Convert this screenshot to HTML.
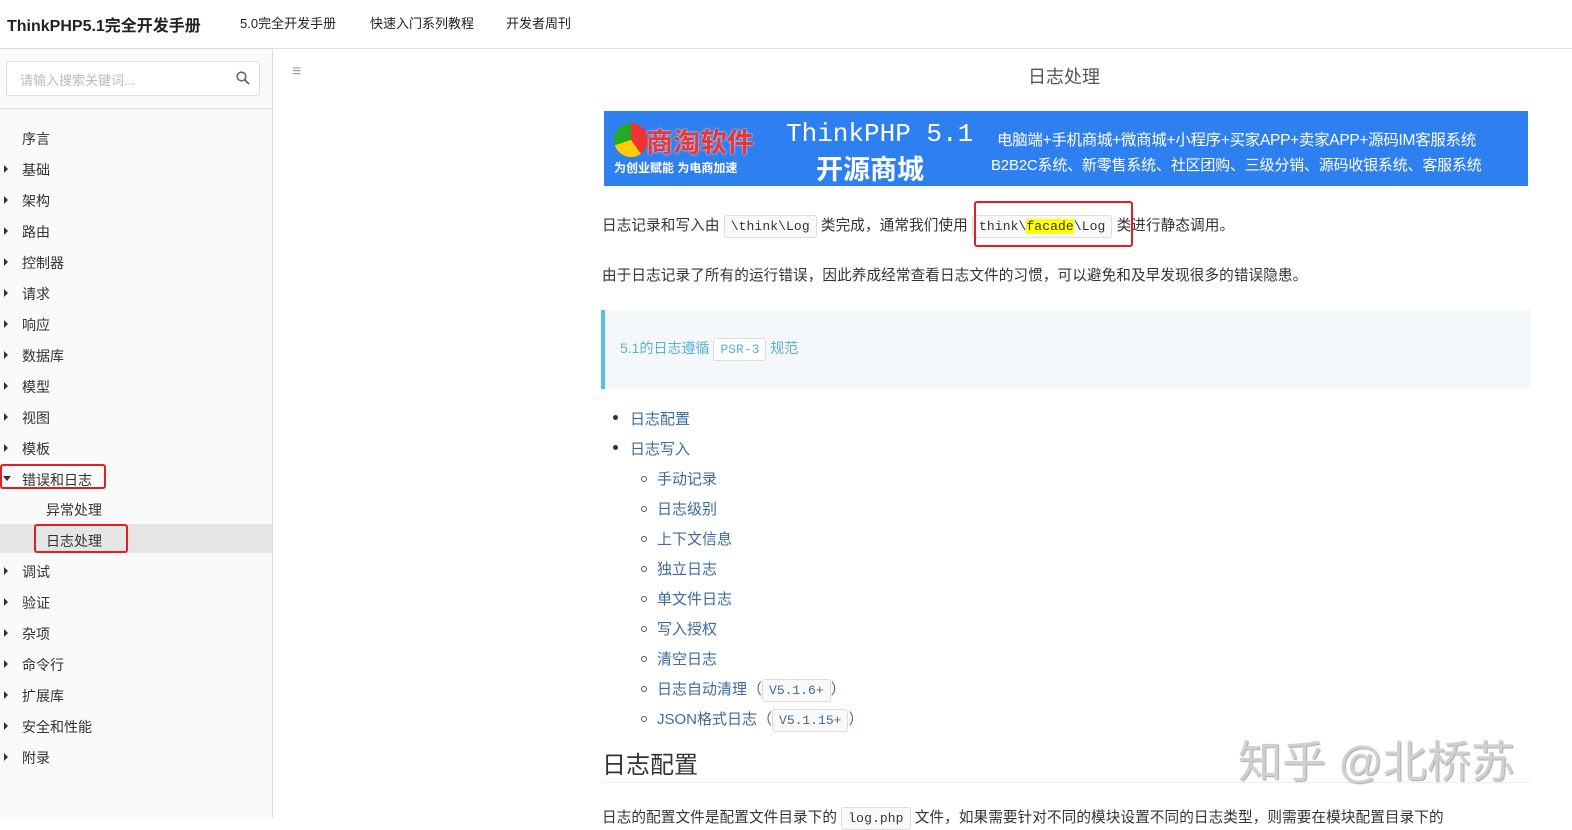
<!DOCTYPE html>
<html><head><meta charset="utf-8"><style>
*{margin:0;padding:0;box-sizing:border-box}
body{width:1572px;height:818px;overflow:hidden;background:#fff;font-family:"Liberation Sans","Noto Sans CJK SC",sans-serif;color:#333;position:relative;font-size:14px}
.a{position:absolute;white-space:nowrap}
#hdr{position:absolute;left:0;top:0;width:1572px;height:49px;border-bottom:1px solid #ddd;background:#fff}
#side{position:absolute;left:0;top:49px;width:273px;height:769px;background:#fafafa;border-right:1px solid #ddd}
.it{position:absolute;left:22px;font-size:14px;color:#333}
.tri{position:absolute;left:4px;width:0;height:0;border-top:4px solid transparent;border-bottom:4px solid transparent;border-left:4px solid #333}
code{font-family:"Liberation Mono",monospace;font-size:13px;border:1px solid #ddd;border-radius:3px;background:#f9f9f9;padding:3px 6px;color:#333}
.lk{color:#3d6b9e;font-size:15px}
.bul{position:absolute;width:5px;height:5px;border-radius:50%;background:#333}
.cir{position:absolute;width:6px;height:6px;border-radius:50%;border:1px solid #555}
.red{position:absolute;border:2px solid #e02020;border-radius:3px}
.p{font-size:14.6px;letter-spacing:0.1px}
</style></head><body>
<div id="hdr">
<div class="a" style="left:7px;top:12px;font-size:16px;font-weight:bold;color:#222">ThinkPHP5.1完全开发手册</div>
<div class="a" style="left:240px;top:13px;font-size:13px;color:#222">5.0完全开发手册</div>
<div class="a" style="left:370px;top:13px;font-size:13px;color:#222">快速入门系列教程</div>
<div class="a" style="left:506px;top:13px;font-size:13px;color:#222">开发者周刊</div>
</div>
<div id="side">
<div style="position:absolute;left:0;top:59px;width:272px;border-top:1px solid #ddd"></div>
<div style="position:absolute;left:6px;top:12px;width:254px;height:35px;border:1px solid #ddd;border-radius:3px;background:#fff"></div>
<div class="a" style="left:20px;top:21px;font-size:13px;color:#bbb">请输入搜索关键词...</div>
<svg class="a" style="left:236px;top:22px" width="14" height="14"><circle cx="5.5" cy="5.5" r="4.3" fill="none" stroke="#666" stroke-width="1.6"/><line x1="8.6" y1="8.6" x2="13" y2="13" stroke="#666" stroke-width="1.8"/></svg>
<div style="position:absolute;left:0;top:475px;width:272px;height:29px;background:#e5e5e5"></div>
</div>
<div class="it" style="top:129px">序言</div>
<div id="items"></div>
<script>
var n=["基础","架构","路由","控制器","请求","响应","数据库","模型","视图","模板","错误和日志"];
var h="";for(var i=0;i<n.length;i++){var t=160+i*31;h+='<div class="it" style="top:'+t+'px">'+n[i]+'</div>';if(i<10)h+='<div class="tri" style="top:'+(t+5)+'px"></div>';}
var m=["调试","验证","杂项","命令行","扩展库","安全和性能","附录"];
for(var j=0;j<m.length;j++){var t2=562+j*31;h+='<div class="it" style="top:'+t2+'px">'+m[j]+'</div><div class="tri" style="top:'+(t2+5)+'px"></div>';}
document.getElementById('items').innerHTML=h;
</script>
<div style="position:absolute;left:3px;top:476px;width:0;height:0;border-left:4px solid transparent;border-right:4px solid transparent;border-top:5px solid #333"></div>
<div class="it" style="left:46px;top:500px">异常处理</div>
<div class="it" style="left:46px;top:531px">日志处理</div>
<div class="red" style="left:0;top:464px;width:106px;height:25px"></div>
<div class="red" style="left:34px;top:524px;width:94px;height:29px"></div>
<div class="a" style="left:292px;top:63px;font-size:16px;color:#999">≡</div>
<div class="a" style="left:1028px;top:63px;font-size:18px;color:#555">日志处理</div>
<div class="a" style="left:604px;top:111px;width:924px;height:75px;background:#2e7ff0;overflow:hidden">
<div class="a" style="left:10px;top:12px;width:34px;height:34px;border-radius:50%;background:conic-gradient(#e33 0 40%,#fc0 0 70%,#2a2 0)"></div>
<div class="a" style="left:42px;top:10px;font-size:27px;font-weight:bold;color:#e33;text-shadow:0 0 2px #fff">商淘软件</div>
<div class="a" style="left:10px;top:48px;font-size:12px;color:#fff;font-weight:bold">为创业赋能 为电商加速</div>
<div class="a" style="left:182px;top:8px;font-size:26px;color:#fff;font-family:'Liberation Mono',monospace">ThinkPHP 5.1</div>
<div class="a" style="left:212px;top:37px;font-size:27px;color:#fff;font-weight:bold">开源商城</div>
<div class="a" style="left:393px;top:17px;font-size:15.5px;color:#fff;letter-spacing:-0.3px">电脑端+手机商城+微商城+小程序+买家APP+卖家APP+源码IM客服系统</div>
<div class="a" style="left:387px;top:43px;font-size:15px;color:#fff;letter-spacing:-0.2px">B2B2C系统、新零售系统、社区团购、三级分销、源码收银系统、客服系统</div>
</div>
<div class="a p" style="left:602px;top:214px">日志记录和写入由 <code>\think\Log</code> 类完成，通常我们使用 <code>think\<span style="background:#ff0">facade</span>\Log</code> 类进行静态调用。</div>
<div class="red" style="left:974px;top:201px;width:159px;height:46px"></div>
<div class="a p" style="left:602px;top:264px">由于日志记录了所有的运行错误，因此养成经常查看日志文件的习惯，可以避免和及早发现很多的错误隐患。</div>
<div class="a" style="left:601px;top:310px;width:930px;height:79px;background:#f4f8fa;border-left:4px solid #5bc0de"></div>
<div class="a" style="left:620px;top:338px;font-size:14px;color:#5bb0d0">5.1的日志遵循 <code style="color:#5bb0d0;background:#fff">PSR-3</code> 规范</div>
<div class="bul" style="left:613px;top:415px"></div><div class="a lk" style="left:630px;top:408px">日志配置</div>
<div class="bul" style="left:613px;top:445px"></div><div class="a lk" style="left:630px;top:438px">日志写入</div>
<div id="sub"></div>
<script>
var s=["手动记录","日志级别","上下文信息","独立日志","单文件日志","写入授权","清空日志","日志自动清理（<code class=\"lk\" style=\"font-size:13px\">V5.1.6+</code>）","JSON格式日志（<code class=\"lk\" style=\"font-size:13px\">V5.1.15+</code>）"];
var g="";for(var k=0;k<s.length;k++){var y=468+k*30;g+='<div class="cir" style="left:641px;top:'+(y+8)+'px"></div><div class="a lk" style="left:657px;top:'+y+'px">'+s[k]+'</div>';}
document.getElementById('sub').innerHTML=g;
</script>
<div class="a" style="left:602px;top:745px;font-size:24px;color:#333">日志配置</div>
<div class="a" style="left:602px;top:782px;width:928px;border-top:1px solid #eee"></div>
<div class="a" style="left:1238px;top:726px;font-size:44px;color:#d0d0d0;text-shadow:1px 1px 1px #aaa">知乎 @北桥苏</div>
<div class="a p" style="left:602px;top:806px">日志的配置文件是配置文件目录下的 <code>log.php</code> 文件，如果需要针对不同的模块设置不同的日志类型，则需要在模块配置目录下的</div>
</body></html>
